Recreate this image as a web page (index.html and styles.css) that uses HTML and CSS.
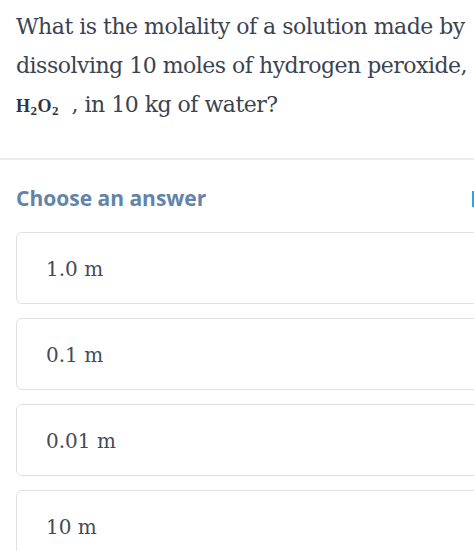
FILE: index.html
```html
<!DOCTYPE html>
<html lang="en">
<head>
<meta charset="utf-8">
<title>Question</title>
<link rel="stylesheet" href="styles.css">
</head>
<body>
<main class="page">
  <section class="question">
    <p class="question-text">What is the molality of a solution made by dissolving 10 moles of hydrogen peroxide, <span class="formula">H<sub>2</sub>O<sub>2</sub></span> , in 10 kg of water?</p>
  </section>
  <hr class="divider">
  <section class="answers">
    <div class="answers-head">
      <h2 class="answers-title">Choose an answer</h2>
      <span class="answers-marker"></span>
    </div>
    <ul class="options">
      <li class="option">1.0 m</li>
      <li class="option">0.1 m</li>
      <li class="option">0.01 m</li>
      <li class="option">10 m</li>
    </ul>
  </section>
</main>
</body>
</html>
```

FILE: styles.css
```css
html, body {
  margin: 0;
  padding: 0;
  background: #ffffff;
  overflow: hidden;
}

.page {
  width: 474px;
}

.question {
  padding: 7px 0 0 16px;
}

.question-text {
  margin: 0;
  font-family: "DejaVu Serif", "Liberation Serif", serif;
  font-size: 22px;
  letter-spacing: -0.5px;
  line-height: 39px;
  color: #3b4350;
}

.formula {
  font-family: "Liberation Serif", "Times New Roman", serif;
  font-weight: bold;
  font-size: 18px;
  letter-spacing: 0.5px;
  color: #2f3641;
  padding-right: 6px;
}

.formula sub {
  font-size: 13px;
  line-height: 0;
  vertical-align: -3px;
}

.divider {
  margin: 32px 0 0 0;
  border: 0;
  height: 2px;
  background: #eaecf0;
}

.answers {
  padding: 25px 0 0 16px;
}

.answers-head {
  display: flex;
  justify-content: space-between;
  align-items: flex-start;
}

.answers-title {
  margin: 0;
  font-family: "Open Sans", "Liberation Sans", sans-serif;
  font-weight: 700;
  font-size: 21px;
  line-height: 27px;
  color: #6383a8;
}

.answers-marker {
  width: 2px;
  height: 16px;
  margin-top: 6px;
  background: #2aa8d8;
}

.options {
  list-style: none;
  margin: 20px -30px 0 0;
  padding: 0;
  display: flex;
  flex-direction: column;
  gap: 14px;
}

.option {
  border: 1px solid #dfe1e5;
  border-radius: 6px;
  padding: 23px 29px 21px;
  font-family: "DejaVu Serif", "Liberation Serif", serif;
  font-size: 20px;
  line-height: 26px;
  color: #434b57;
}
```
